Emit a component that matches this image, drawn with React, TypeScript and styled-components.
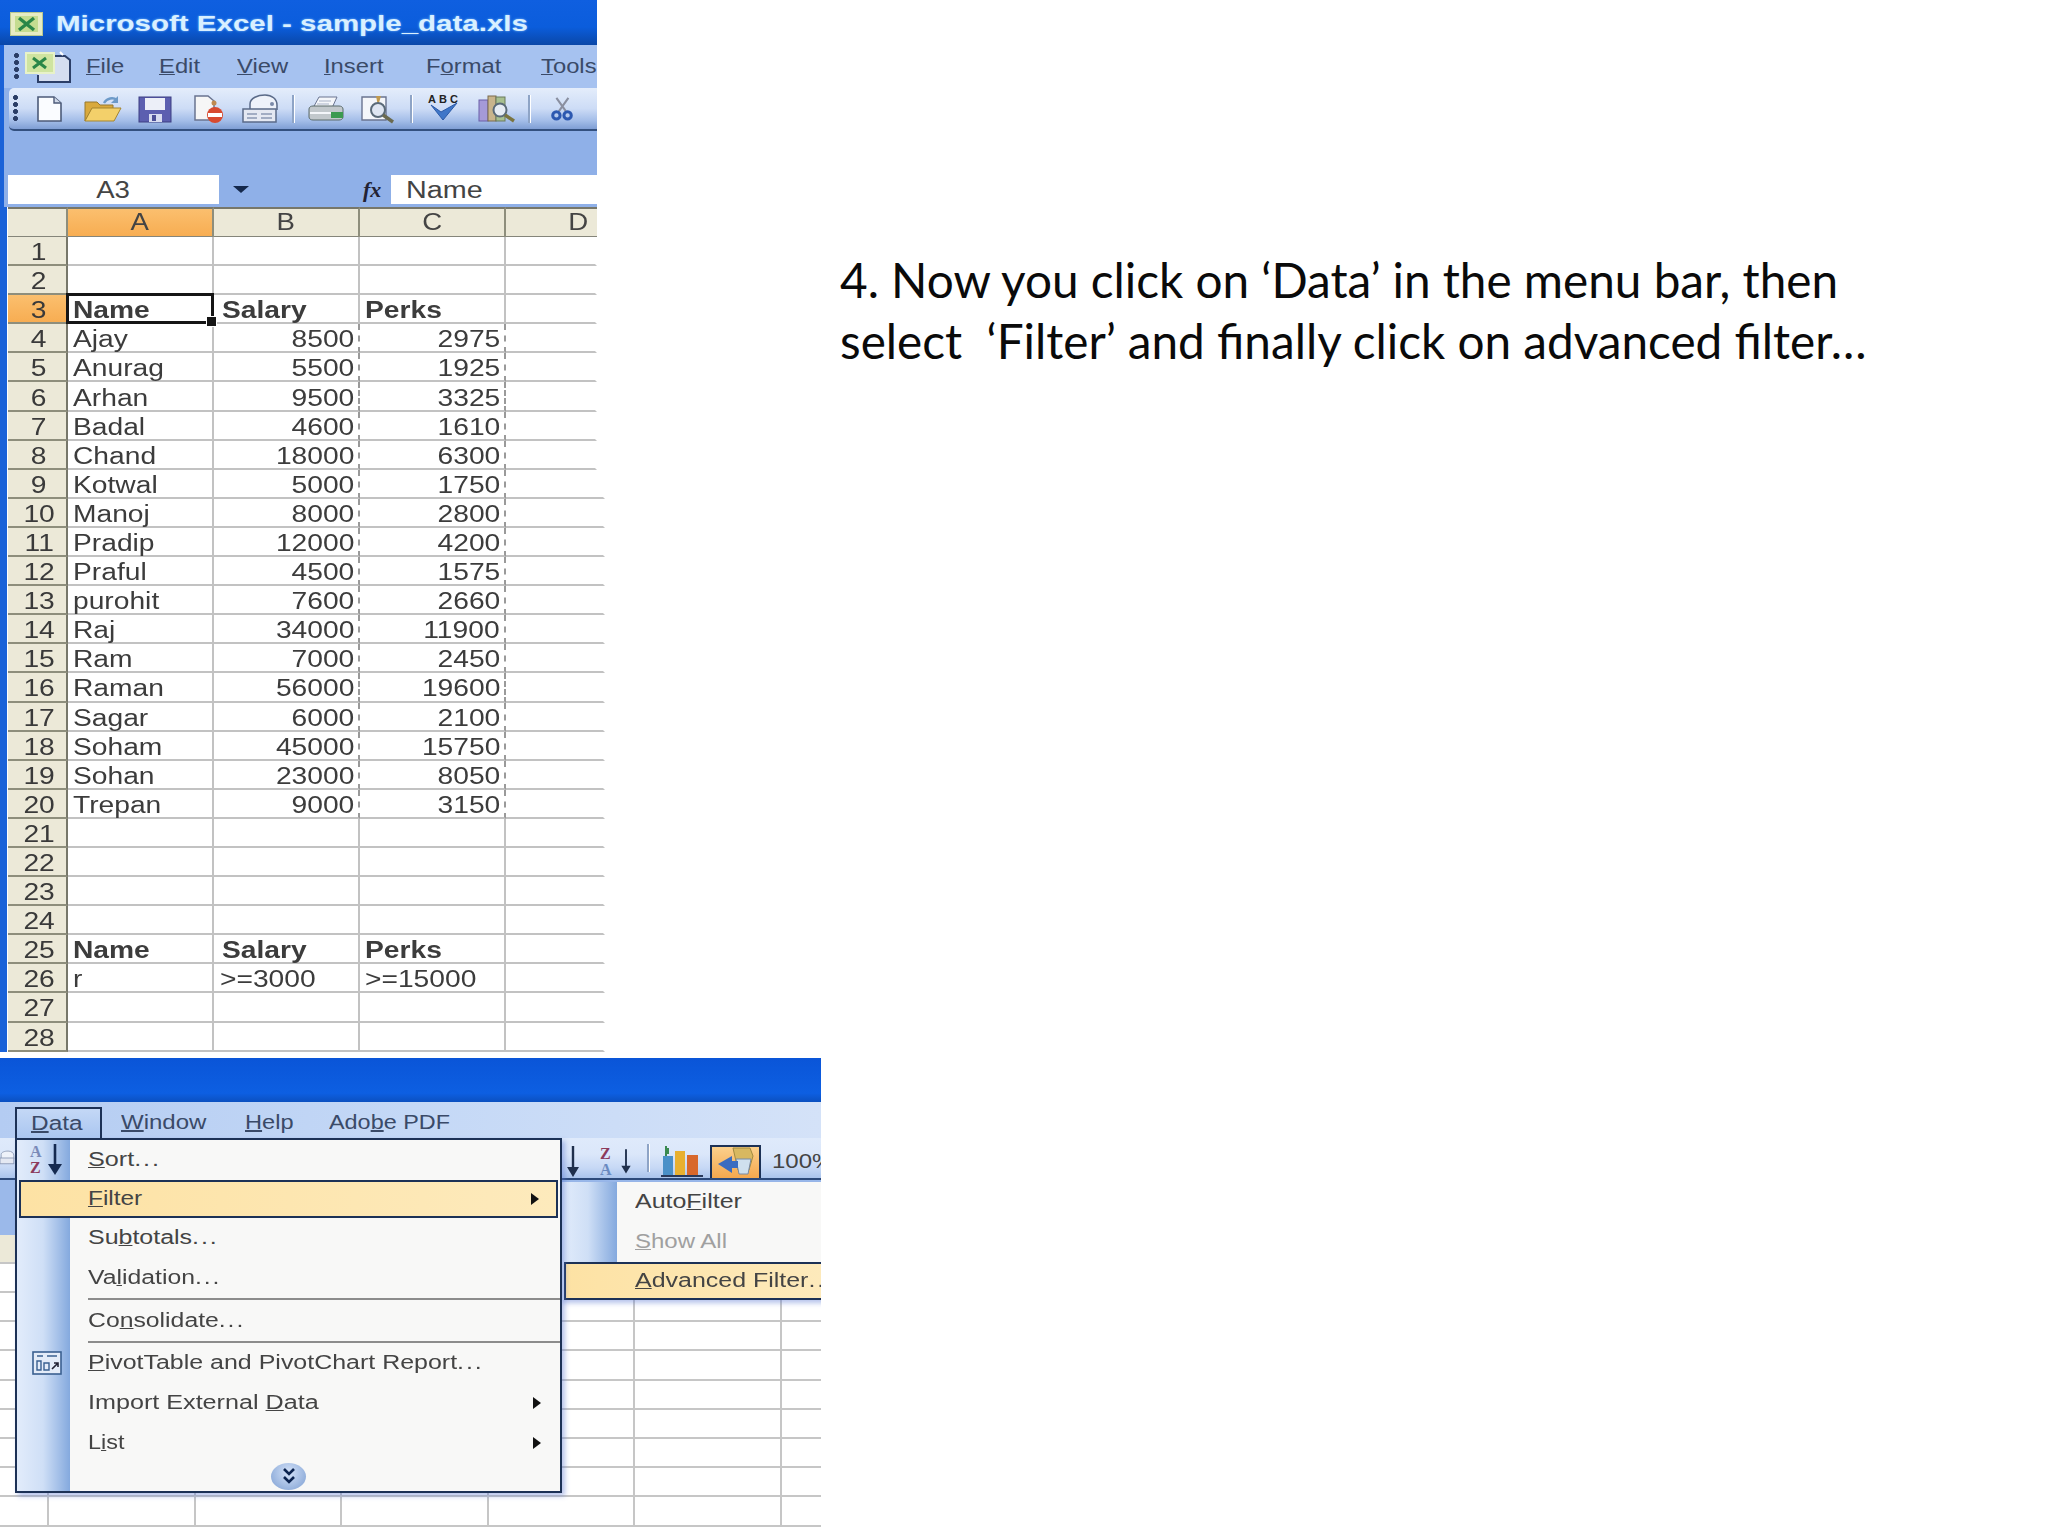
import React from "react"
import styled, { createGlobalStyle } from "styled-components"

const Global = createGlobalStyle`
html, body { margin: 0; padding: 0; background: #fff; }
* { box-sizing: border-box; }
`

const Slide = styled.div`
width: 2048px;
height: 1536px;
display: flex;
background: #fff;
overflow: hidden;
font-family: "Liberation Sans", Arial, sans-serif;
`

const Shots = styled.div`
width: 821px;
flex: none;
display: flex;
flex-direction: column;
gap: 6px;
filter: blur(0.7px);
`

const Note = styled.div`
margin-left: 19px;
padding-top: 249px;
font-family: Lato, "Open Sans", sans-serif;
font-size: 47.7px;
line-height: 61px;
color: #0a0a0a;
white-space: pre;
`

/* the screenshots were stretched sideways, so their text is too */
const Txt = styled.span<{ $sx?: number; $o?: string }>`
display: inline-block;
white-space: nowrap;
transform: scaleX(${p => p.$sx ?? 1.2});
transform-origin: ${p => p.$o ?? "left"} center;
`

const Dots = styled.span`
letter-spacing: 1.5px;
`

const Window = styled.div`
width: 605px;
`

const Title = styled.div`
width: 597px;
height: 45px;
display: flex;
align-items: center;
gap: 13px;
padding: 2px 0 0 10px;
background: linear-gradient(180deg, #0f5fe0 0%, #0b5ddc 60%, #0a47a8 100%);
color: #d9f0ff;
font-size: 22px;
font-weight: 700;
text-shadow: 0 0 2px #7fc0ff;
`

const Chrome = styled.div`
width: 597px;
border-left: 4px solid #1a62d8;
background: #8fb0e8;
`

const MenuBar = styled.div`
height: 43px;
display: flex;
align-items: center;
background: #a6c2f0;
color: #3a4a68;
font-size: 19.5px;
overflow: hidden;
`

const GripBox = styled.div`
width: 82px;
flex: none;
display: flex;
align-items: center;
padding-left: 10px;
`

const MenuItem = styled.div<{ $w: number }>`
width: ${p => p.$w}px;
flex: none;
`

const Toolbar = styled.div`
height: 43px;
margin-left: 5px;
display: flex;
align-items: center;
padding-left: 4px;
background: linear-gradient(180deg, #e4edfb 0%, #cddcf6 50%, #a3bde8 80%, #7f9ed4 100%);
border-bottom: 2px solid #33507f;
border-radius: 5px 0 0 5px;
`

const Slot = styled.div`
width: 53px;
flex: none;
display: flex;
justify-content: center;
`

const Grip = styled.div`
width: 9.5px;
flex: none;
height: 28px;
background: radial-gradient(circle at 2.5px 2.5px, #2a3d66 2.2px, transparent 2.6px) 0 0 / 6px 7px repeat-y;
`

const Sep = styled.div`
width: 12px;
height: 28px;
flex: none;
display: flex;
justify-content: center;
&::before {
    content: "";
    width: 2px;
    background: #8ea4c6;
    border-right: 1px solid #fff;
}
`

const Spacer = styled.div`
height: 44px;
`

const FormulaRow = styled.div`
height: 29px;
display: flex;
align-items: center;
padding-left: 4px;
font-size: 23px;
color: #444;
`

const NameBox = styled.div`
width: 211px;
height: 29px;
padding-top: 1px;
background: #fff;
display: flex;
align-items: center;
justify-content: center;
`

const DropArrow = styled.div`
margin-left: 14px;
width: 0;
height: 0;
border-left: 8px solid transparent;
border-right: 8px solid transparent;
border-top: 7px solid #14284c;
flex: none;
`

const Fx = styled.div`
margin-left: 114px;
width: 28px;
flex: none;
font-family: "Liberation Serif", serif;
font-style: italic;
font-weight: 700;
font-size: 22px;
color: #223;
`

const FormulaBox = styled.div`
flex: 1;
height: 29px;
background: #fff;
padding: 1px 0 0 15px;
display: flex;
align-items: center;
`

const Gap3 = styled.div`
height: 3px;
`

const Sheet = styled.div`
padding-left: 7px;
border-left: 7px solid #1a62d8;
box-shadow: inset 1px 0 0 #fff;
`

const Head = styled.div`
width: 589px;
height: 30px;
display: grid;
grid-template-columns: 60px repeat(4, 146px);
overflow: hidden;
margin-left: -6px;
`

const HeadCell = styled.div<{ $on?: boolean }>`
display: flex;
align-items: center;
justify-content: center;
background: ${p => (p.$on ? "linear-gradient(180deg,#fbbf6e,#f7ad52)" : "#ece9d8")};
border-top: 2px solid #77776a;
border-right: 2px solid #8e8e7c;
border-bottom: 2px solid #85857a;
color: #444;
font-size: 23px;
`

const Row = styled.div<{ $short?: boolean }>`
width: ${p => (p.$short ? 589 : 597)}px;
height: 29.1px;
margin-left: -6px;
display: grid;
grid-template-columns: 60px repeat(3, 146px) 1fr;
grid-template-rows: 29.1px;
`

const RowHead = styled.div<{ $on?: boolean }>`
display: flex;
align-items: center;
justify-content: center;
padding: 3px 0 0 4px;
line-height: 22px;
background: ${p => (p.$on ? "linear-gradient(180deg,#fbbf6e,#f7ad52)" : "#ece9d8")};
border-right: 2px solid #77776a;
border-bottom: 2px solid #8e8e7c;
color: #3a3a3a;
font-size: 23.5px;
`

const Cell = styled.div<{ $right?: boolean; $dash?: boolean; $bold?: boolean; $pad?: number; $open?: boolean }>`
position: relative;
display: flex;
align-items: center;
justify-content: ${p => (p.$right ? "flex-end" : "flex-start")};
padding: 3px 4px 0 ${p => p.$pad ?? 5}px;
line-height: 22px;
border-right: 2px ${p => (p.$open ? "solid transparent" : p.$dash ? "dashed #9a9a9a" : "solid #c2c2c2")};
border-bottom: 2px solid #c2c2c2;
background: #fff;
color: #3c3c3c;
font-size: 23.5px;
font-weight: ${p => (p.$bold ? 700 : 400)};
`

const Cursor = styled.div`
position: absolute;
left: -2px;
right: -2px;
top: -2px;
bottom: -2px;
border: 3px solid #151515;
z-index: 1;
&::after {
    content: "";
    position: absolute;
    right: -6px;
    bottom: -6px;
    width: 9px;
    height: 9px;
    background: #151515;
    border: 1px solid #fff;
}
`

const Lower = styled.div`
position: relative;
width: 821px;
height: 472px;
overflow: hidden;
`

const BlueBand = styled.div`
height: 44px;
background: linear-gradient(180deg, #0a55d8 0%, #0d5fe2 80%, #0b50c0 100%);
`

const LowerMenu = styled.div`
height: 36px;
display: flex;
align-items: flex-end;
padding-left: 15px;
background: linear-gradient(90deg, #b4ccf2 0%, #c4d8f6 50%, #d4e2f8 100%);
color: #3a4a68;
font-size: 20px;
`

const DataTab = styled.div`
width: 87px;
height: 31px;
padding: 3px 0 0 14px;
flex: none;
border: 2px solid #1c3156;
border-bottom: none;
background: linear-gradient(180deg, #c4d8f6, #aac6f0);
position: relative;
z-index: 3;
margin-right: 19px;
`

const LowerItem = styled.div<{ $w: number }>`
width: ${p => p.$w}px;
flex: none;
padding-bottom: 4px;
`

const LowerTools = styled.div`
height: 42px;
display: flex;
align-items: center;
background: linear-gradient(180deg, #dfeafb 0%, #dbe7fa 40%, #c6d8f5 75%, #aac4ec 100%);
border-bottom: 2px solid #2d4a7a;
font-size: 20px;
color: #444;
`

const ToolStub = styled.div`
width: 15px;
flex: none;
overflow: hidden;
display: flex;
justify-content: flex-end;
`

const ToolRun = styled.div`
margin-left: 548px;
display: flex;
align-items: center;
height: 100%;
`

const ToolIcon = styled.div<{ $w: number; $active?: boolean }>`
width: ${p => p.$w}px;
height: 33px;
flex: none;
margin-top: 7px;
display: flex;
align-items: center;
justify-content: center;
${p =>
    p.$active &&
    `background: linear-gradient(180deg,#fbd08c,#f5a84e);
     border: 2px solid #1c3156;
     border-bottom: none;`}
`

const Zoom = styled.div`
margin-left: 11px;
margin-top: 7px;
`

const BlueFill = styled.div`
height: 55px;
background: #9bb9ea;
`

const GridRow = styled.div`
height: 29.2px;
display: grid;
grid-template-columns: 49px repeat(6, 146.5px);
`

const GridCell = styled.div<{ $beige?: boolean }>`
border-right: 2px solid #c6c6c6;
border-bottom: 2px solid #c6c6c6;
background: ${p => (p.$beige ? "#ece9d8" : "#fff")};
`

const Dropdown = styled.div`
position: absolute;
left: 15px;
top: 80px;
width: 547px;
height: 355px;
border: 2px solid #1c3156;
background: linear-gradient(90deg, #e2ecfb 0, #cfdff6 26px, #84a9de 53px, #f8f8f7 53px);
box-shadow: 3px 3px 5px rgba(90, 120, 210, 0.45);
color: #444;
font-size: 19.5px;
z-index: 2;
`

const Item = styled.div<{ $h?: number }>`
height: ${p => p.$h ?? 40}px;
display: grid;
grid-template-columns: 71px 1fr 46px;
align-items: center;
`

const ItemOn = styled.div`
height: 38px;
margin: 0 2px;
display: grid;
grid-template-columns: 67px 1fr 42px;
align-items: center;
background: linear-gradient(90deg, #fde2a4, #fdeabc);
border: 2px solid #1c3156;
`

const Gutter = styled.div`
display: flex;
justify-content: center;
padding-right: 12px;
`

const Arrow = styled.div`
justify-self: center;
width: 0;
height: 0;
border-top: 6px solid transparent;
border-bottom: 6px solid transparent;
border-left: 8px solid #111;
`

const MenuLine = styled.div`
height: 2px;
margin-left: 71px;
background: #8c8c8c;
`

const More = styled.div`
width: 35px;
height: 27px;
margin: 0 auto;
border-radius: 50%;
display: flex;
align-items: center;
justify-content: center;
background: radial-gradient(circle at 50% 35%, #d4e2f8, #7c9ed2);
`

const Submenu = styled.div`
position: absolute;
left: 562px;
top: 124px;
width: 270px;
height: 118px;
background: linear-gradient(90deg, #e2ecfb 0, #cfdff6 26px, #84a9de 55px, #f8f8f7 55px);
box-shadow: 0 3px 5px rgba(90, 120, 210, 0.45);
color: #444;
font-size: 19.5px;
z-index: 1;
`

const SubItem = styled.div<{ $off?: boolean }>`
height: 40px;
padding-left: 73px;
display: flex;
align-items: center;
color: ${p => (p.$off ? "#a0a0a0" : "inherit")};
`

const SubItemOn = styled.div`
height: 38px;
margin-left: 2px;
padding-left: 69px;
display: flex;
align-items: center;
background: linear-gradient(90deg, #fde2a4, #fdeabc);
border: 2px solid #1c3156;
`

const XlsTitleIcon = () => (
    <svg width="33" height="24" viewBox="0 0 33 24">
        <rect x="0.5" y="0.5" width="32" height="23" fill="#e6ecc4" stroke="#b8c890" />
        <rect x="5" y="4" width="23" height="16" fill="#c4dc90" />
        <path d="M9 6l15 12M24 6L9 18" stroke="#2a8748" strokeWidth="3.4" />
    </svg>
)

const XlsMenuIcon = () => (
    <svg width="50" height="32" viewBox="0 0 50 32">
        <path d="M9 5h32l5 4v22H14V24" fill="#d5def0" stroke="#2c3f68" strokeWidth="2" />
        <rect x="2" y="2" width="28" height="20" fill="#cfe4a0" stroke="#e8f2c8" strokeWidth="2" />
        <path d="M9 7l13 10M22 7L9 17" stroke="#2a8748" strokeWidth="3" />
        <path d="M36 1l3 3" stroke="#fff" strokeWidth="2" />
    </svg>
)

const IconNew = () => (
    <svg width="36" height="28" viewBox="0 0 36 28">
        <path d="M7 2h16l7 6v18H7z" fill="#fafcff" stroke="#4c5a78" strokeWidth="1.6" />
        <path d="M23 2v6h7" fill="#cfd8e8" stroke="#4c5a78" strokeWidth="1.4" />
    </svg>
)

const IconOpen = () => (
    <svg width="40" height="28" viewBox="0 0 40 28">
        <path d="M3 7h12l3 3h13v4H10L3 26z" fill="#d9a93c" stroke="#97782e" />
        <path d="M3 26l7-13h29l-7 13z" fill="#f3d06a" stroke="#a5852f" />
        <path d="M22 8c3-5 9-6 13-3" fill="none" stroke="#6d9ac8" strokeWidth="2.4" />
        <path d="M36 1v7h-7z" fill="#6d9ac8" />
    </svg>
)

const IconSave = () => (
    <svg width="34" height="28" viewBox="0 0 34 28">
        <rect x="1" y="2" width="32" height="25" fill="#5c5fb0" stroke="#3c3f82" />
        <rect x="7" y="3" width="20" height="12" fill="#eceff8" />
        <rect x="11" y="19" width="13" height="8" fill="#d8dcf0" />
        <rect x="14" y="20" width="4" height="6" fill="#4c4f98" />
    </svg>
)

const IconPerm = () => (
    <svg width="36" height="30" viewBox="0 0 36 30">
        <path d="M5 2h13l6 5v19H5z" fill="#f6f6f6" stroke="#6a7490" strokeWidth="1.5" />
        <circle cx="24" cy="9" r="2.5" fill="#c08a50" />
        <circle cx="25" cy="21" r="8" fill="#d84a30" />
        <rect x="18" y="19" width="14" height="4" fill="#fff" />
    </svg>
)

const IconMail = () => (
    <svg width="40" height="30" viewBox="0 0 40 30">
        <path d="M9 15V10C9 4 17 1 24 1s12 4 12 10v5" fill="#eef2fa" stroke="#5a6a88" strokeWidth="1.5" />
        <circle cx="31" cy="10" r="2" fill="#7a8aa8" />
        <rect x="2" y="15" width="33" height="13" fill="#e4e8f2" stroke="#5a6a88" strokeWidth="1.5" />
        <path d="M6 20h10M20 20h11M6 24h10M20 24h11" stroke="#8a98b4" strokeWidth="1.5" />
    </svg>
)

const IconPrint = () => (
    <svg width="38" height="28" viewBox="0 0 38 28">
        <path d="M12 2h18l-5 11H6z" fill="#f4f6fa" stroke="#6a7490" />
        <path d="M12 6h12M10 9h12" stroke="#aab4c8" />
        <path d="M2 14c0-2 2-3 4-3h26c2 0 4 1 4 3v8c0 2-2 3-4 3H6c-2 0-4-1-4-3z" fill="#c2c8cc" stroke="#5a6a6a" />
        <rect x="24" y="17" width="12" height="6" fill="#3c9a50" />
        <rect x="3" y="17" width="21" height="2" fill="#f4f6fa" />
    </svg>
)

const IconPreview = () => (
    <svg width="38" height="30" viewBox="0 0 38 30">
        <path d="M2 3h24v23H2z" fill="#f4f6fa" stroke="#6a7490" strokeWidth="1.4" />
        <path d="M18 12l-2-10h5z" fill="#c09a50" />
        <circle cx="18" cy="16" r="7" fill="#dfe6f2" stroke="#5a6a78" strokeWidth="2" />
        <path d="M23 21l10 7" stroke="#6a6a50" strokeWidth="3.4" />
    </svg>
)

const IconSpell = () => (
    <svg width="38" height="30" viewBox="0 0 38 30">
        <text x="3" y="9" fontFamily="Liberation Sans" fontWeight="700" fontSize="11" fill="#222" textLength="30">ABC</text>
        <path d="M6 11l10 7 16-9-14 17z" fill="#3f76c8" stroke="#2a5aa8" />
    </svg>
)

const IconResearch = () => (
    <svg width="40" height="30" viewBox="0 0 40 30">
        <rect x="2" y="6" width="9" height="21" fill="#a59ad8" stroke="#6a5ea8" />
        <rect x="11" y="2" width="8" height="25" fill="#c8b48c" stroke="#7a6a4c" />
        <rect x="19" y="3" width="9" height="24" fill="#a8c090" stroke="#6a7a5c" />
        <circle cx="23" cy="16" r="6.5" fill="#e6ecf4" stroke="#5a6a78" strokeWidth="2" />
        <path d="M28 21l9 6" stroke="#7a7440" strokeWidth="3.4" />
    </svg>
)

const IconCut = () => (
    <svg width="24" height="26" viewBox="0 0 30 30">
        <path d="M8 1l12 17M23 1L11 18" stroke="#8a8fa0" strokeWidth="2.6" />
        <circle cx="8" cy="23" r="4.6" fill="none" stroke="#2c58b0" strokeWidth="3.8" />
        <circle cx="22" cy="23" r="4.6" fill="none" stroke="#2c58b0" strokeWidth="3.8" />
    </svg>
)

const IconDown = () => (
    <svg width="18" height="34" viewBox="0 0 18 34">
        <path d="M9 2v26" stroke="#1f2f4c" strokeWidth="2.4" />
        <path d="M3 23l6 10 6-10z" fill="#1f2f4c" />
    </svg>
)

const IconChart = () => (
    <svg width="44" height="34" viewBox="0 0 44 34">
        <rect x="3" y="12" width="10" height="19" fill="#4a90c8" />
        <rect x="15" y="7" width="10" height="24" fill="#e8b030" />
        <rect x="27" y="11" width="11" height="20" fill="#d8682c" />
        <path d="M6 2v10M8 4v6" stroke="#3a8a50" strokeWidth="2" />
        <path d="M1 32h42" stroke="#2a3a5c" strokeWidth="2" />
    </svg>
)

const IconPivotTool = () => (
    <svg width="40" height="32" viewBox="0 0 40 32">
        <path d="M17 2h17l3 8-4 14H22z" fill="#d8b860" stroke="#a08a40" />
        <path d="M20 13h15l-3 15H23z" fill="#cfe0ee" stroke="#7a8aa0" />
        <path d="M2 18l14-8v5h6v7h-6v5z" fill="#3a6cc0" />
    </svg>
)

const IconSort = () => (
    <svg width="38" height="36" viewBox="0 0 38 36">
        <text x="2" y="15" fontFamily="Liberation Serif" fontWeight="700" fontSize="16" fill="#7a8ab8">A</text>
        <text x="2" y="31" fontFamily="Liberation Serif" fontWeight="700" fontSize="16" fill="#8c3a5c">Z</text>
        <path d="M27 2v25" stroke="#152a50" strokeWidth="2.6" />
        <path d="M20 22l7 11 7-11z" fill="#152a50" />
    </svg>
)

const IconZa = () => (
    <svg width="22" height="34" viewBox="0 0 22 34">
        <text x="3" y="15" fontFamily="Liberation Serif" fontWeight="700" fontSize="16" fill="#8c3a5c">Z</text>
        <text x="3" y="31" fontFamily="Liberation Serif" fontWeight="700" fontSize="16" fill="#6a8ac0">A</text>
    </svg>
)

const IconPivotItem = () => (
    <svg width="30" height="24" viewBox="0 0 30 24">
        <rect x="1" y="1" width="28" height="22" fill="#e4ecf8" stroke="#3a6090" strokeWidth="1.6" />
        <path d="M5 5h6M15 5h10M5 10h4v9H5zM12 12h5v7h-5z" fill="none" stroke="#3a6090" strokeWidth="1.4" />
        <path d="M20 18l6-6M22 12h4v4" fill="none" stroke="#223" strokeWidth="1.6" />
    </svg>
)

const IconMore = () => (
    <svg width="14" height="18" viewBox="0 0 14 18">
        <path d="M2 2l5 5 5-5M2 10l5 5 5-5" fill="none" stroke="#0c2450" strokeWidth="2.6" />
    </svg>
)

const IconGhost = () => (
    <svg width="26" height="28" viewBox="0 0 26 28">
        <path d="M2 14V8C2 4 8 2 14 2s10 3 10 8v6" fill="#eef2fa" stroke="#8a98b4" strokeWidth="1.5" />
        <rect x="0" y="14" width="24" height="10" fill="#e4e8f2" stroke="#8a98b4" strokeWidth="1.5" />
    </svg>
)

const menus: [React.ReactNode, number][] = [
    [<><u>F</u>ile</>, 73],
    [<><u>E</u>dit</>, 78],
    [<><u>V</u>iew</>, 87],
    [<><u>I</u>nsert</>, 102],
    [<>F<u>o</u>rmat</>, 115],
    [<><u>T</u>ools</>, 60],
]

const rows: string[][] = [
    [], [],
    ["Name", "Salary", "Perks"],
    ["Ajay", "8500", "2975"],
    ["Anurag", "5500", "1925"],
    ["Arhan", "9500", "3325"],
    ["Badal", "4600", "1610"],
    ["Chand", "18000", "6300"],
    ["Kotwal", "5000", "1750"],
    ["Manoj", "8000", "2800"],
    ["Pradip", "12000", "4200"],
    ["Praful", "4500", "1575"],
    ["purohit", "7600", "2660"],
    ["Raj", "34000", "11900"],
    ["Ram", "7000", "2450"],
    ["Raman", "56000", "19600"],
    ["Sagar", "6000", "2100"],
    ["Soham", "45000", "15750"],
    ["Sohan", "23000", "8050"],
    ["Trepan", "9000", "3150"],
    [], [], [], [],
    ["Name", "Salary", "Perks"],
    ["r", ">=3000", ">=15000"],
    [], [],
]

export default function App() {
    return (
        <Slide>
            <Global />
            <Shots>
                <Window>
                    <Title>
                        <XlsTitleIcon />
                        <Txt $sx={1.34}>Microsoft Excel - sample_data.xls</Txt>
                    </Title>
                    <Chrome>
                        <MenuBar>
                            <GripBox>
                                <Grip />
                                <XlsMenuIcon />
                            </GripBox>
                            {menus.map(([label, w], i) => (
                                <MenuItem key={i} $w={w}><Txt $sx={1.22}>{label}</Txt></MenuItem>
                            ))}
                        </MenuBar>
                        <Toolbar>
                            <Grip />
                            <Slot><IconNew /></Slot>
                            <Slot><IconOpen /></Slot>
                            <Slot><IconSave /></Slot>
                            <Slot><IconPerm /></Slot>
                            <Slot><IconMail /></Slot>
                            <Sep />
                            <Slot><IconPrint /></Slot>
                            <Slot><IconPreview /></Slot>
                            <Sep />
                            <Slot><IconSpell /></Slot>
                            <Slot><IconResearch /></Slot>
                            <Sep />
                            <Slot><IconCut /></Slot>
                        </Toolbar>
                        <Spacer />
                        <FormulaRow>
                            <NameBox><Txt $o="center">A3</Txt></NameBox>
                            <DropArrow />
                            <Fx>fx</Fx>
                            <FormulaBox><Txt $sx={1.25}>Name</Txt></FormulaBox>
                        </FormulaRow>
                        <Gap3 />
                    </Chrome>
                    <Sheet>
                        <Head>
                            <HeadCell />
                            <HeadCell $on><Txt $o="center">A</Txt></HeadCell>
                            <HeadCell><Txt $o="center">B</Txt></HeadCell>
                            <HeadCell><Txt $o="center">C</Txt></HeadCell>
                            <HeadCell><Txt $o="center">D</Txt></HeadCell>
                        </Head>
                        {rows.map((r, i) => {
                            const isHeader = r[0] === "Name"
                            const isNum = !isHeader && i !== 25
                            const dash = i >= 3 && i < 20
                            return (
                                <Row key={i} $short={i < 8}>
                                    <RowHead $on={i === 2}><Txt $o="center">{i + 1}</Txt></RowHead>
                                    <Cell $bold={isHeader}>
                                        {r[0] && <Txt>{r[0]}</Txt>}
                                        {i === 2 && <Cursor />}
                                    </Cell>
                                    <Cell $bold={isHeader} $right={isNum} $dash={dash} $pad={isHeader ? 8 : 6}>
                                        {r[1] && <Txt $o={isNum ? "right" : "left"}>{r[1]}</Txt>}
                                    </Cell>
                                    <Cell $bold={isHeader} $right={isNum} $dash={dash}>
                                        {r[2] && <Txt $o={isNum ? "right" : "left"}>{r[2]}</Txt>}
                                    </Cell>
                                    <Cell $open />
                                </Row>
                            )
                        })}
                    </Sheet>
                </Window>
                <Lower>
                    <BlueBand />
                    <LowerMenu>
                        <DataTab><Txt $sx={1.22}><u>D</u>ata</Txt></DataTab>
                        <LowerItem $w={124}><Txt $sx={1.2}><u>W</u>indow</Txt></LowerItem>
                        <LowerItem $w={84}><Txt $sx={1.18}><u>H</u>elp</Txt></LowerItem>
                        <LowerItem $w={200}><Txt $sx={1.17}>Ado<u>b</u>e PDF</Txt></LowerItem>
                    </LowerMenu>
                    <LowerTools>
                        <ToolStub><IconGhost /></ToolStub>
                        <ToolRun>
                            <ToolIcon $w={20}><IconDown /></ToolIcon>
                            <ToolIcon $w={14} />
                            <ToolIcon $w={22}><IconZa /></ToolIcon>
                            <ToolIcon $w={14}><IconDown /></ToolIcon>
                            <ToolIcon $w={9} />
                            <Sep />
                            <ToolIcon $w={56}><IconChart /></ToolIcon>
                            <ToolIcon $w={51} $active><IconPivotTool /></ToolIcon>
                            <Zoom><Txt $sx={1.2}>100%</Txt></Zoom>
                        </ToolRun>
                    </LowerTools>
                    <BlueFill />
                    {Array.from({ length: 10 }, (_, i) => (
                        <GridRow key={i}>
                            {Array.from({ length: 7 }, (_, j) => (
                                <GridCell key={j} $beige={i === 0 && j === 0} />
                            ))}
                        </GridRow>
                    ))}
                    <Dropdown>
                        <Item>
                            <Gutter><IconSort /></Gutter>
                            <Txt $sx={1.29}><u>S</u>ort<Dots>...</Dots></Txt>
                        </Item>
                        <ItemOn>
                            <span />
                            <Txt $sx={1.25}><u>F</u>ilter</Txt>
                            <Arrow />
                        </ItemOn>
                        <Item>
                            <span />
                            <Txt $sx={1.28}>Su<u>b</u>totals<Dots>...</Dots></Txt>
                        </Item>
                        <Item>
                            <span />
                            <Txt $sx={1.27}>Va<u>l</u>idation<Dots>...</Dots></Txt>
                        </Item>
                        <MenuLine />
                        <Item $h={41}>
                            <span />
                            <Txt $sx={1.27}>Co<u>n</u>solidate<Dots>...</Dots></Txt>
                        </Item>
                        <MenuLine />
                        <Item>
                            <Gutter><IconPivotItem /></Gutter>
                            <Txt $sx={1.28}><u>P</u>ivotTable and PivotChart Report<Dots>...</Dots></Txt>
                        </Item>
                        <Item>
                            <span />
                            <Txt $sx={1.29}>Import External <u>D</u>ata</Txt>
                            <Arrow />
                        </Item>
                        <Item>
                            <span />
                            <Txt $sx={1.2}>L<u>i</u>st</Txt>
                            <Arrow />
                        </Item>
                        <More><IconMore /></More>
                    </Dropdown>
                    <Submenu>
                        <SubItem><Txt $sx={1.28}>Auto<u>F</u>ilter</Txt></SubItem>
                        <SubItem $off><Txt $sx={1.23}><u>S</u>how All</Txt></SubItem>
                        <SubItemOn><Txt $sx={1.28}><u>A</u>dvanced Filter<Dots>...</Dots></Txt></SubItemOn>
                    </Submenu>
                </Lower>
            </Shots>
            <Note>
                4. Now you click on ‘Data’ in the menu bar, then{"\n"}select  ‘Filter’ and finally click on advanced filter…
            </Note>
        </Slide>
    )
}
